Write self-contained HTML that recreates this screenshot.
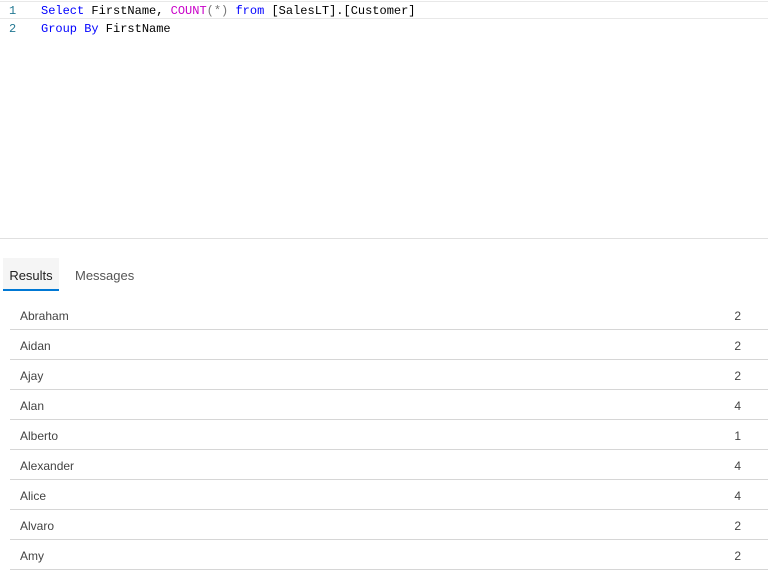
<!DOCTYPE html>
<html><head><style>
body{margin:0;width:768px;height:569px;overflow:hidden;background:#fff;font-family:"Liberation Sans",sans-serif;position:relative}
.hl{position:absolute;left:0;top:1px;width:768px;height:18px;border-top:1px solid #e8e8e8;border-bottom:1px solid #e8e8e8;box-sizing:border-box}
.code{position:absolute;font-family:"Liberation Mono",monospace;font-size:12px;white-space:pre;line-height:18px}
.ln{color:#237893;left:9px}
.kw{color:#0000ff}.fn{color:#c800c8}.op{color:#777}
.div{position:absolute;left:0;top:238px;width:768px;height:1px;background:#e0e0e0}
.tab{position:absolute;top:258px;height:33px;font-size:13px;line-height:35px}
.row{position:absolute;left:10px;width:758px;height:30px;border-bottom:1px solid #d6d6d6;box-sizing:border-box;font-size:12px;color:#444}
.row span{position:absolute;top:9px}
.row .v{right:27px}
</style></head><body>
<div class="hl"></div>
<div class="code ln" style="top:2px">1</div>
<div class="code ln" style="top:20px">2</div>
<div class="code" style="left:41px;top:2px;color:#000"><span class="kw">Select</span> FirstName, <span class="fn">COUNT</span><span class="op">(*)</span> <span class="kw">from</span> [SalesLT].[Customer]</div>
<div class="code" style="left:41px;top:20px;color:#000"><span class="kw">Group By</span> FirstName</div>
<div class="div"></div>
<div class="tab" style="left:3px;width:56px;background:#f5f5f5;text-align:center;color:#222;border-bottom:2px solid #0078d4;box-sizing:border-box">Results</div>
<div class="tab" style="left:75px;color:#555">Messages</div>
<div class="row" style="top:300px"><span style="left:10px">Abraham</span><span class="v">2</span></div>
<div class="row" style="top:330px"><span style="left:10px">Aidan</span><span class="v">2</span></div>
<div class="row" style="top:360px"><span style="left:10px">Ajay</span><span class="v">2</span></div>
<div class="row" style="top:390px"><span style="left:10px">Alan</span><span class="v">4</span></div>
<div class="row" style="top:420px"><span style="left:10px">Alberto</span><span class="v">1</span></div>
<div class="row" style="top:450px"><span style="left:10px">Alexander</span><span class="v">4</span></div>
<div class="row" style="top:480px"><span style="left:10px">Alice</span><span class="v">4</span></div>
<div class="row" style="top:510px"><span style="left:10px">Alvaro</span><span class="v">2</span></div>
<div class="row" style="top:540px"><span style="left:10px">Amy</span><span class="v">2</span></div>
</body></html>
